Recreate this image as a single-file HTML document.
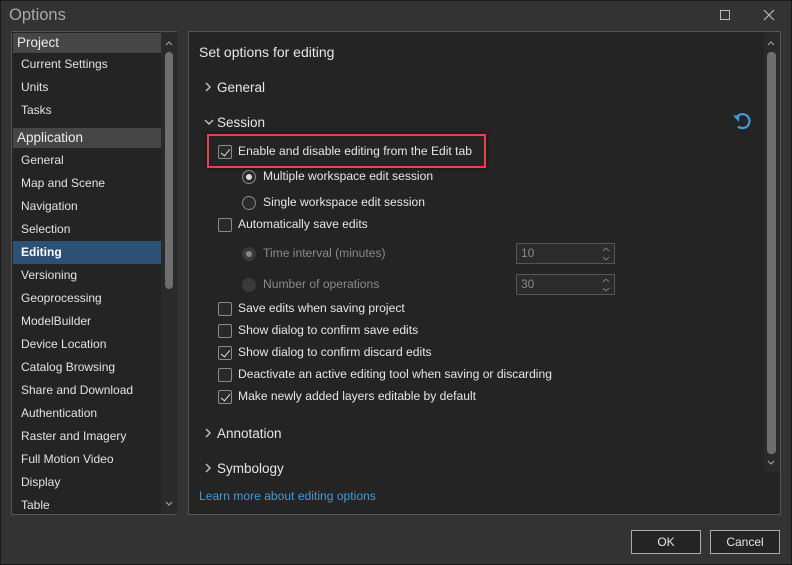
<!DOCTYPE html>
<html><head><meta charset="utf-8"><style>
*{margin:0;padding:0;box-sizing:border-box}
body{width:792px;height:565px;background:#333;font-family:"Liberation Sans",sans-serif;color:#e6e6e6;position:relative;overflow:hidden;font-size:12px}
.a{position:absolute;white-space:nowrap}
.win{position:absolute;left:0;top:0;width:792px;height:565px;border:1px solid #1a1a1a}
.panel{position:absolute;background:#242424;border:1px solid #555}
.li{position:absolute;left:1px;width:148px;height:23px;line-height:23px;padding-left:8px;font-size:12px;color:#e2e2e2}
.hd{position:absolute;left:1px;width:148px;height:20px;line-height:20px;padding-left:4px;font-size:13.5px;background:#464646;color:#eee}
.cb{position:absolute;width:14px;height:14px;border:1px solid #8a8a8a;border-radius:2px;background:#2a2a2a}
.cb.c::after{content:"";position:absolute;left:4px;top:1px;width:4px;height:8px;border:solid #ddd;border-width:0 1.5px 1.5px 0;transform:rotate(40deg)}
.t{position:absolute;font-size:12.1px;color:#e6e6e6;white-space:nowrap}
.sec{position:absolute;font-size:13.5px;color:#e6e6e6;white-space:nowrap}
.rd{position:absolute;width:14px;height:14px;border-radius:50%;border:1px solid #888;background:#2a2a2a}
.btn{position:absolute;height:24px;border:1px solid #aaa;background:#242424;text-align:center;line-height:22px;font-size:12px;color:#e6e6e6}
.sp{position:absolute;width:99px;height:21px;background:#2b2b2b;border:1px solid #555;color:#888;font-size:12px;line-height:19px;padding-left:4px}
.sp svg{position:absolute;right:4px;top:3px}
</style></head><body>
<div class="win"></div>
<div class="a" style="left:9px;top:6px;font-size:16.5px;color:#a8a8a8">Options</div>
<div class="a" style="left:720px;top:10px;width:10px;height:10px;border:1px solid #bbb"></div>
<svg class="a" style="left:763px;top:9px" width="12" height="12"><path d="M1 1L11 11M11 1L1 11" stroke="#bbb" stroke-width="1.2"/></svg>

<div class="panel" style="left:11px;top:31px;width:166px;height:484px">
<div class="hd" style="top:1px">Project</div>
<div class="li" style="top:21px">Current Settings</div>
<div class="li" style="top:44px">Units</div>
<div class="li" style="top:67px">Tasks</div>
<div class="hd" style="top:96px">Application</div>
<div class="li" style="top:117px">General</div>
<div class="li" style="top:140px">Map and Scene</div>
<div class="li" style="top:163px">Navigation</div>
<div class="li" style="top:186px">Selection</div>
<div class="li" style="top:209px;background:#2d5075;font-weight:bold;color:#fff">Editing</div>
<div class="li" style="top:232px">Versioning</div>
<div class="li" style="top:255px">Geoprocessing</div>
<div class="li" style="top:278px">ModelBuilder</div>
<div class="li" style="top:301px">Device Location</div>
<div class="li" style="top:324px">Catalog Browsing</div>
<div class="li" style="top:347px">Share and Download</div>
<div class="li" style="top:370px">Authentication</div>
<div class="li" style="top:393px">Raster and Imagery</div>
<div class="li" style="top:416px">Full Motion Video</div>
<div class="li" style="top:439px">Display</div>
<div class="li" style="top:462px">Table</div>
<div class="a" style="left:149px;top:0;width:16px;height:482px;background:#2a2a2a"></div>
<div class="a" style="left:153px;top:20px;width:8px;height:237px;background:#6e6e6e;border-radius:4px"></div>
<svg class="a" style="left:153px;top:8px" width="8" height="6"><path d="M1 5L4 2L7 5" fill="none" stroke="#aaa"/></svg>
<svg class="a" style="left:153px;top:469px" width="8" height="6"><path d="M1 1L4 4L7 1" fill="none" stroke="#aaa"/></svg>
</div>

<div class="panel" style="left:188px;top:31px;width:593px;height:484px">
<div class="a" style="left:575px;top:0;width:16px;height:440px;background:#2a2a2a"></div>
<div class="a" style="left:578px;top:20px;width:9px;height:402px;background:#6e6e6e;border-radius:4px"></div>
<svg class="a" style="left:578px;top:8px" width="8" height="6"><path d="M1 5L4 2L7 5" fill="none" stroke="#aaa"/></svg>
<svg class="a" style="left:578px;top:428px" width="8" height="6"><path d="M1 1L4 4L7 1" fill="none" stroke="#aaa"/></svg>
</div>

<div class="sec" style="left:199px;top:44px;font-size:14px">Set options for editing</div>
<svg class="a" style="left:204px;top:82px" width="8" height="10"><path d="M2 1L6 5L2 9" fill="none" stroke="#bbb" stroke-width="1.5"/></svg>
<div class="sec" style="left:217px;top:80px">General</div>
<svg class="a" style="left:204px;top:118px" width="10" height="8"><path d="M1 2L5 6L9 2" fill="none" stroke="#bbb" stroke-width="1.5"/></svg>
<div class="sec" style="left:217px;top:115px">Session</div>
<svg class="a" style="left:730px;top:111px" width="22" height="20"><path d="M6.5 6.5A7 7 0 1 1 8 15.5" fill="none" stroke="#3d9be0" stroke-width="2.2"/><path d="M3 4.5L9.5 4.5L9 11Z" fill="#3d9be0"/></svg>

<div class="a" style="left:207px;top:134px;width:279px;height:34px;border:2px solid #e8414a;box-shadow:0 0 4px rgba(0,0,0,.6)"></div>
<div class="cb c" style="left:218px;top:145px"></div><div class="t" style="left:238px;top:144px">Enable and disable editing from the Edit tab</div>
<div class="rd" style="left:242px;top:170px"><div style="position:absolute;left:3px;top:3px;width:6px;height:6px;border-radius:50%;background:#ddd"></div></div><div class="t" style="left:263px;top:169px">Multiple workspace edit session</div>
<div class="rd" style="left:242px;top:196px"></div><div class="t" style="left:263px;top:195px">Single workspace edit session</div>
<div class="cb" style="left:218px;top:218px"></div><div class="t" style="left:238px;top:217px">Automatically save edits</div>
<div class="rd" style="left:242px;top:247px;background:#3a3a3a;border-color:#3a3a3a"><div style="position:absolute;left:3px;top:3px;width:6px;height:6px;border-radius:50%;background:#888"></div></div><div class="t" style="left:263px;top:246px;color:#8a8a8a">Time interval (minutes)</div>
<div class="sp" style="left:516px;top:243px">10<svg width="8" height="14"><path d="M1 4L4 1L7 4M1 10L4 13L7 10" fill="none" stroke="#777"/></svg></div>
<div class="rd" style="left:242px;top:278px;background:#3a3a3a;border-color:#3a3a3a"></div><div class="t" style="left:263px;top:277px;color:#8a8a8a">Number of operations</div>
<div class="sp" style="left:516px;top:274px">30<svg width="8" height="14"><path d="M1 4L4 1L7 4M1 10L4 13L7 10" fill="none" stroke="#777"/></svg></div>
<div class="cb" style="left:218px;top:302px"></div><div class="t" style="left:238px;top:301px">Save edits when saving project</div>
<div class="cb" style="left:218px;top:324px"></div><div class="t" style="left:238px;top:323px">Show dialog to confirm save edits</div>
<div class="cb c" style="left:218px;top:346px"></div><div class="t" style="left:238px;top:345px">Show dialog to confirm discard edits</div>
<div class="cb" style="left:218px;top:368px"></div><div class="t" style="left:238px;top:367px">Deactivate an active editing tool when saving or discarding</div>
<div class="cb c" style="left:218px;top:390px"></div><div class="t" style="left:238px;top:389px">Make newly added layers editable by default</div>
<svg class="a" style="left:204px;top:428px" width="8" height="10"><path d="M2 1L6 5L2 9" fill="none" stroke="#bbb" stroke-width="1.5"/></svg>
<div class="sec" style="left:217px;top:426px">Annotation</div>
<svg class="a" style="left:204px;top:463px" width="8" height="10"><path d="M2 1L6 5L2 9" fill="none" stroke="#bbb" stroke-width="1.5"/></svg>
<div class="sec" style="left:217px;top:461px">Symbology</div>
<div class="t" style="left:199px;top:489px;color:#3d9be0">Learn more about editing options</div>

<div class="btn" style="left:631px;top:530px;width:70px">OK</div>
<div class="btn" style="left:710px;top:530px;width:70px">Cancel</div>
</body></html>
